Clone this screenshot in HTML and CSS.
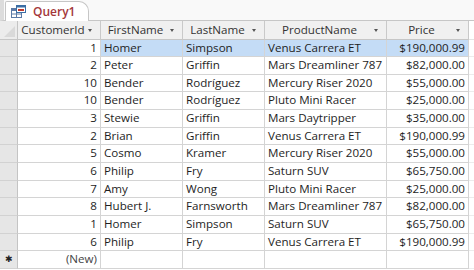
FILE: index.html
```html
<!DOCTYPE html>
<html>
<head>
<meta charset="utf-8">
<link rel="stylesheet" href="styles.css">
</head>
<body>
<div class="app">
  <div class="tabbar">
    <div class="tab">
      <svg class="qicon" width="15" height="13" viewBox="0 0 15 13">
        <rect x="0.5" y="3.5" width="10" height="9" fill="#fff" stroke="#5b7aa6"/>
        <rect x="0.5" y="3.5" width="10" height="2.5" fill="#5b7aa6"/>
        <line x1="0.5" y1="9" x2="10.5" y2="9" stroke="#5b7aa6"/>
        <line x1="5.5" y1="3.5" x2="5.5" y2="12.5" stroke="#5b7aa6"/>
        <rect x="5.5" y="0.5" width="9" height="7" fill="#fff" stroke="#3b6ea5"/>
        <rect x="5.5" y="0.5" width="9" height="2" fill="#3b6ea5"/>
        <rect x="7" y="4" width="6" height="2" fill="#c0392b"/>
      </svg>
      <span class="tablabel">Query1</span>
    </div>
  </div>
  <div class="grid">
    <div class="row head">
      <div class="sel corner"><span class="tri"></span></div>
      <div class="hc w1"><span class="ht">CustomerId</span><span class="arr"></span></div>
      <div class="hc w2"><span class="ht">FirstName</span><span class="arr"></span></div>
      <div class="hc w3"><span class="ht">LastName</span><span class="arr"></span></div>
      <div class="hc w4"><span class="ht">ProductName</span><span class="arr"></span></div>
      <div class="hc w5"><span class="ht">Price</span><span class="arr"></span></div>
      <div class="fill"></div>
    </div>
    <div class="row selected">
      <div class="sel"></div>
      <div class="c w1 num cur">1</div><div class="c w2">Homer</div><div class="c w3">Simpson</div><div class="c w4">Venus Carrera ET</div><div class="c w5 num">$190,000.99</div><div class="fill"></div>
    </div>
    <div class="row">
      <div class="sel"></div>
      <div class="c w1 num">2</div><div class="c w2">Peter</div><div class="c w3">Griffin</div><div class="c w4">Mars Dreamliner 787</div><div class="c w5 num">$82,000.00</div><div class="fill"></div>
    </div>
    <div class="row">
      <div class="sel"></div>
      <div class="c w1 num">10</div><div class="c w2">Bender</div><div class="c w3">Rodríguez</div><div class="c w4">Mercury Riser 2020</div><div class="c w5 num">$55,000.00</div><div class="fill"></div>
    </div>
    <div class="row">
      <div class="sel"></div>
      <div class="c w1 num">10</div><div class="c w2">Bender</div><div class="c w3">Rodríguez</div><div class="c w4">Pluto Mini Racer</div><div class="c w5 num">$25,000.00</div><div class="fill"></div>
    </div>
    <div class="row">
      <div class="sel"></div>
      <div class="c w1 num">3</div><div class="c w2">Stewie</div><div class="c w3">Griffin</div><div class="c w4">Mars Daytripper</div><div class="c w5 num">$35,000.00</div><div class="fill"></div>
    </div>
    <div class="row">
      <div class="sel"></div>
      <div class="c w1 num">2</div><div class="c w2">Brian</div><div class="c w3">Griffin</div><div class="c w4">Venus Carrera ET</div><div class="c w5 num">$190,000.99</div><div class="fill"></div>
    </div>
    <div class="row">
      <div class="sel"></div>
      <div class="c w1 num">5</div><div class="c w2">Cosmo</div><div class="c w3">Kramer</div><div class="c w4">Mercury Riser 2020</div><div class="c w5 num">$55,000.00</div><div class="fill"></div>
    </div>
    <div class="row">
      <div class="sel"></div>
      <div class="c w1 num">6</div><div class="c w2">Philip</div><div class="c w3">Fry</div><div class="c w4">Saturn SUV</div><div class="c w5 num">$65,750.00</div><div class="fill"></div>
    </div>
    <div class="row">
      <div class="sel"></div>
      <div class="c w1 num">7</div><div class="c w2">Amy</div><div class="c w3">Wong</div><div class="c w4">Pluto Mini Racer</div><div class="c w5 num">$25,000.00</div><div class="fill"></div>
    </div>
    <div class="row">
      <div class="sel"></div>
      <div class="c w1 num">8</div><div class="c w2">Hubert J.</div><div class="c w3">Farnsworth</div><div class="c w4">Mars Dreamliner 787</div><div class="c w5 num">$82,000.00</div><div class="fill"></div>
    </div>
    <div class="row">
      <div class="sel"></div>
      <div class="c w1 num">1</div><div class="c w2">Homer</div><div class="c w3">Simpson</div><div class="c w4">Saturn SUV</div><div class="c w5 num">$65,750.00</div><div class="fill"></div>
    </div>
    <div class="row">
      <div class="sel"></div>
      <div class="c w1 num">6</div><div class="c w2">Philip</div><div class="c w3">Fry</div><div class="c w4">Venus Carrera ET</div><div class="c w5 num">$190,000.99</div><div class="fill"></div>
    </div>
    <div class="row newrow">
      <div class="sel star">✱</div>
      <div class="c w1 num newtxt">(New)</div><div class="c w2"></div><div class="c w3"></div><div class="c w4"></div><div class="c w5"></div><div class="fill"></div>
    </div>
  </div>
</div>
</body>
</html>
```
FILE: styles.css
```css
html, body {
  margin: 0;
  padding: 0;
  background: #ffffff;
}
.app {
  width: 474px;
  height: 270px;
  overflow: hidden;
  font-family: "Segoe UI", "Open Sans", "Noto Sans", sans-serif;
  font-size: 11.6px;
  color: #1e1e1e;
  background: #ffffff;
}
.tabbar {
  height: 21px;
  box-sizing: border-box;
  background: #f9f9f9;
  border-bottom: 1px solid #c6c6c6;
  border-left: 4px solid #dcdcdc;
  display: flex;
  align-items: flex-end;
}
.tab {
  height: 20px;
  box-sizing: border-box;
  margin-left: 1px;
  margin-bottom: -1px;
  padding: 0 13px 0 5px;
  background: #ffffff;
  border: 1px solid #c6c6c6;
  border-bottom: none;
  border-radius: 2px 10px 0 0;
  display: flex;
  align-items: center;
  gap: 7px;
}
.qicon { display: block; }
.tablabel {
  color: #a4373a;
  font-weight: 600;
  font-size: 12px;
}
.grid {
  display: flex;
  flex-direction: column;
}
.row {
  display: flex;
  height: 17.65px;
  box-sizing: border-box;
}
.row.head { height: 18.5px; background: #eeeeee; }
.sel {
  width: 18px;
  flex: none;
  box-sizing: border-box;
  background: #e6e6e6;
  border-right: 1px solid #c4c4c4;
  border-bottom: 1px solid #d2d2d2;
}
.corner { position: relative; background: #ececec; border-bottom: 1px solid #c6c6c6; }
.tri {
  position: absolute;
  right: 2px;
  bottom: 2px;
  width: 0;
  height: 0;
  border-left: 11px solid transparent;
  border-bottom: 11px solid #d9d9d9;
}
.w1 { width: 83px; }
.w2 { width: 82px; }
.w3 { width: 82px; }
.w4 { width: 122px; }
.w5 { width: 82px; }
.hc, .c { flex: none; box-sizing: border-box; }
.hc {
  display: flex;
  align-items: center;
  background: #f0f0f0;
  border-right: 1px solid #c9c9c9;
  border-bottom: 1px solid #c6c6c6;
  color: #333333;
  padding-right: 8px;
}
.ht { flex: 1; text-align: center; white-space: nowrap; }
.arr {
  width: 0; height: 0;
  border-left: 2.5px solid transparent;
  border-right: 2.5px solid transparent;
  border-top: 3px solid #555555;
  margin-top: 1px;
}
.c {
  border-right: 1px solid #d4d4d4;
  border-bottom: 1px solid #d4d4d4;
  padding: 0 3px;
  line-height: 16.5px;
  white-space: nowrap;
  overflow: hidden;
}
.num { text-align: right; }
.fill { flex: 1; border-bottom: 1px solid #ececec; }
.head .fill { background: #ffffff; border-bottom: 1px solid #e4e4e4; }
.selected .c { background: #c4dcf6; }
.selected .c.cur { background: #ffffff; }
.star {
  font-size: 9px;
  line-height: 16px;
  text-align: center;
  color: #222222;
}
.newtxt { color: #444444; }
```
